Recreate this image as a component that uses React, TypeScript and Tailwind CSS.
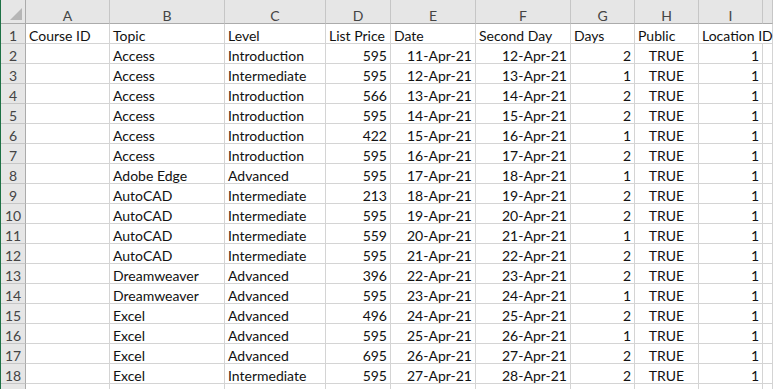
import React from "react";

type Row = [string, string, string, number, string, string, number, string, number];

const rows: Row[] = [
  ["", "Access", "Introduction", 595, "11-Apr-21", "12-Apr-21", 2, "TRUE", 1],
  ["", "Access", "Intermediate", 595, "12-Apr-21", "13-Apr-21", 1, "TRUE", 1],
  ["", "Access", "Introduction", 566, "13-Apr-21", "14-Apr-21", 2, "TRUE", 1],
  ["", "Access", "Introduction", 595, "14-Apr-21", "15-Apr-21", 2, "TRUE", 1],
  ["", "Access", "Introduction", 422, "15-Apr-21", "16-Apr-21", 1, "TRUE", 1],
  ["", "Access", "Introduction", 595, "16-Apr-21", "17-Apr-21", 2, "TRUE", 1],
  ["", "Adobe Edge", "Advanced", 595, "17-Apr-21", "18-Apr-21", 1, "TRUE", 1],
  ["", "AutoCAD", "Intermediate", 213, "18-Apr-21", "19-Apr-21", 2, "TRUE", 1],
  ["", "AutoCAD", "Intermediate", 595, "19-Apr-21", "20-Apr-21", 2, "TRUE", 1],
  ["", "AutoCAD", "Intermediate", 559, "20-Apr-21", "21-Apr-21", 1, "TRUE", 1],
  ["", "AutoCAD", "Intermediate", 595, "21-Apr-21", "22-Apr-21", 2, "TRUE", 1],
  ["", "Dreamweaver", "Advanced", 396, "22-Apr-21", "23-Apr-21", 2, "TRUE", 1],
  ["", "Dreamweaver", "Advanced", 595, "23-Apr-21", "24-Apr-21", 1, "TRUE", 1],
  ["", "Excel", "Advanced", 496, "24-Apr-21", "25-Apr-21", 2, "TRUE", 1],
  ["", "Excel", "Advanced", 595, "25-Apr-21", "26-Apr-21", 1, "TRUE", 1],
  ["", "Excel", "Advanced", 695, "26-Apr-21", "27-Apr-21", 2, "TRUE", 1],
  ["", "Excel", "Intermediate", 595, "27-Apr-21", "28-Apr-21", 2, "TRUE", 1],
];

const headers = ["Course ID", "Topic", "Level", "List Price", "Date", "Second Day", "Days", "Public"];
const letters = ["A", "B", "C", "D", "E", "F", "G", "H", "I", ""];
// alignment for data rows: l = left, r = right, c = center
const align = ["l", "l", "l", "r", "r", "r", "r", "c", "r"];

const cellBase =
  "h-[20px] border-r border-b border-[#d4d4d4] flex items-end pb-0 px-[3px] whitespace-nowrap overflow-hidden text-[#111]";

const rowHead =
  "h-[20px] bg-[#e6e6e6] border-r border-b border-r-[#ababab] border-b-[#c6c6c6] flex items-end justify-center pb-0 text-[#444]";

function alignClass(a: string) {
  if (a === "r") return "justify-end";
  if (a === "c") return "justify-center";
  return "justify-start";
}

export default function App() {
  return (
    <div
      className="w-[773px] h-[389px] overflow-hidden bg-white border-l border-[#1e7145] text-[14px] leading-[15px]"
      style={{ fontFamily: "Lato, 'Liberation Sans', sans-serif" }}
    >
      <div className="grid grid-cols-[25px_84px_115px_101px_65px_85px_95px_64px_64px_64px_1fr]">
        {/* Column header row */}
        <div className="h-[24px] bg-[#e6e6e6] border-r border-b border-[#ababab] relative">
          <svg className="absolute right-[3px] bottom-[3px]" width="12" height="12" viewBox="0 0 12 12">
            <polygon points="12,0 12,12 0,12" fill="#b6b6b6" />
          </svg>
        </div>
        {letters.map((l, i) => (
          <div
            key={"h" + i}
            className="h-[24px] bg-[#e6e6e6] border-r border-b border-r-[#c6c6c6] border-b-[#ababab] flex items-end justify-center pb-0 text-[#444]"
          >
            {l}
          </div>
        ))}

        {/* Row 1 */}
        <div className={rowHead}>1</div>
        {headers.map((h, i) => (
          <div key={"r1" + i} className={cellBase + " justify-start"}>
            {h}
          </div>
        ))}
        {/* Location ID spills into the empty neighbour cell, hiding the gridline */}
        <div className="h-[20px] border-b border-[#d4d4d4] flex items-end pb-0 px-[3px] whitespace-nowrap overflow-visible text-[#111] relative z-10">
          Location ID
        </div>
        <div className="h-[20px] border-r border-b border-[#d4d4d4]"></div>

        {rows.map((r, ri) => (
          <React.Fragment key={"r" + ri}>
            <div className={rowHead}>{ri + 2}</div>
            {r.map((v, ci) => (
              <div key={ci} className={cellBase + " " + alignClass(align[ci])}>
                {String(v)}
              </div>
            ))}
            <div className={cellBase}></div>
          </React.Fragment>
        ))}

        {/* partial row 19 */}
        <div className={rowHead}></div>
        {letters.map((_, i) => (
          <div key={"p" + i} className={cellBase}></div>
        ))}
      </div>
    </div>
  );
}
